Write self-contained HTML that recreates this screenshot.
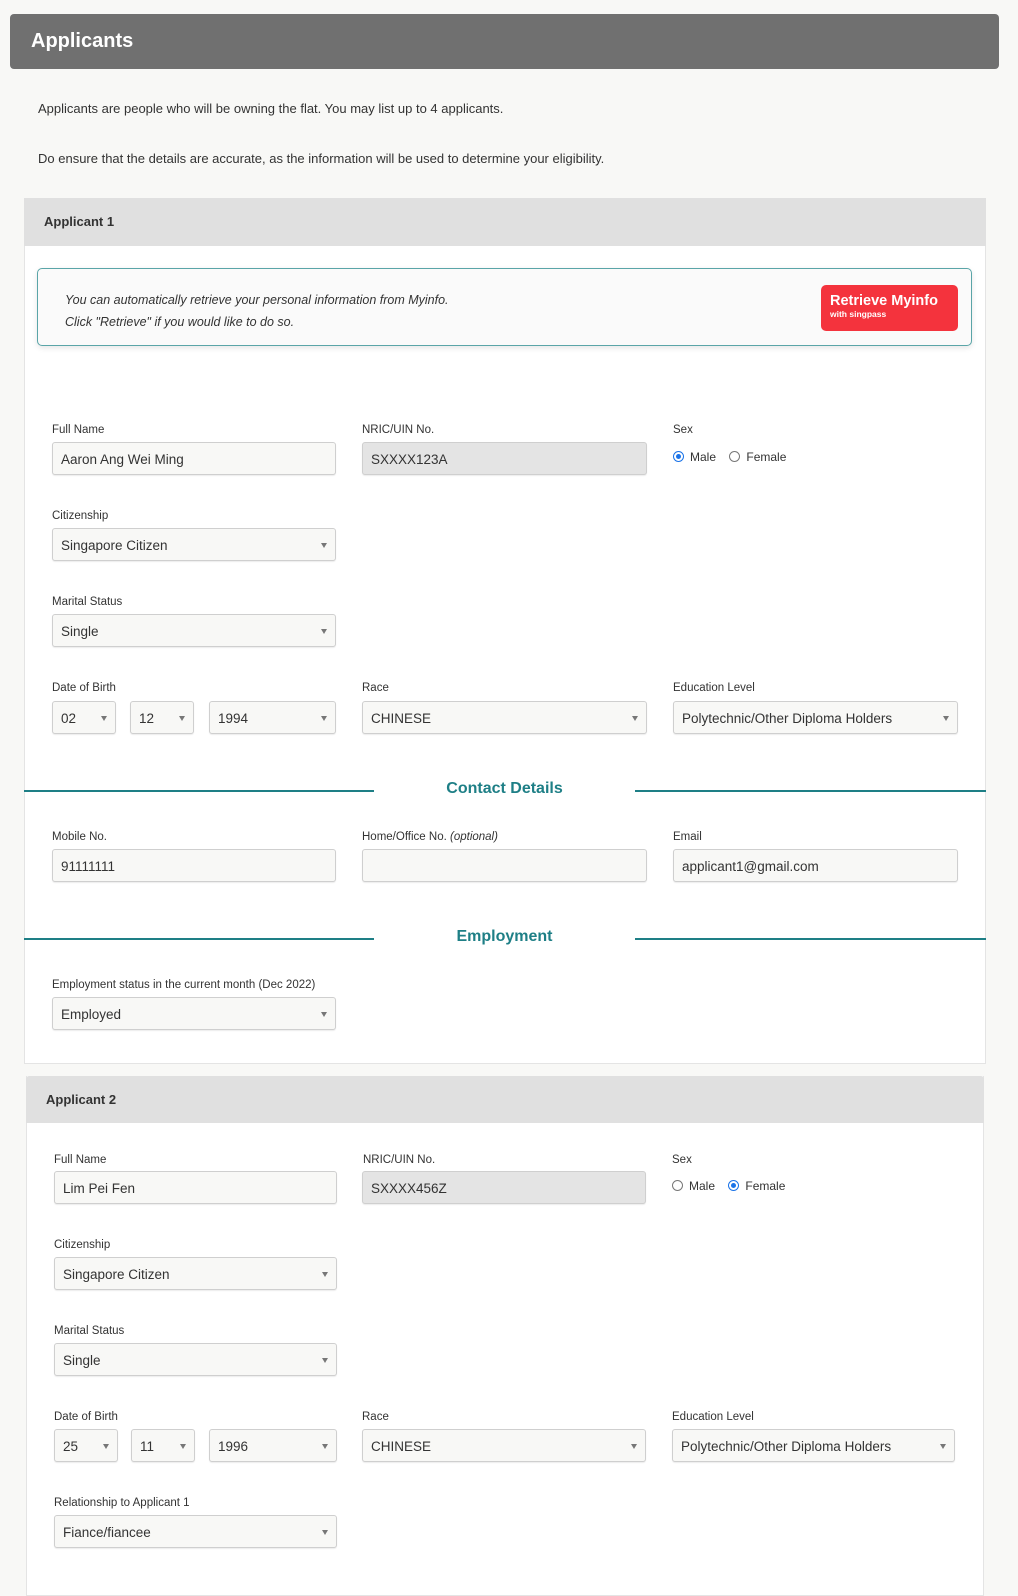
<!DOCTYPE html>
<html><head><meta charset="utf-8"><style>
*{box-sizing:border-box;margin:0;padding:0}
body{width:1018px;height:1582px;background:#f8f8f6;font-family:"Liberation Sans",sans-serif;color:#333;position:relative;overflow:hidden}
.a{position:absolute}
.top{left:10px;top:14px;width:989px;height:55px;background:#707070;border-radius:4px;color:#fff;font-size:20px;font-weight:bold;padding:16px 0 0 21px}
.p{font-size:13px;color:#333}
.card{background:#fff;border:1px solid #e4e4e4}
.hd{background:#e0e0e0;font-size:13px;font-weight:bold;color:#333}
.lb{font-size:11.5px;color:#333}
.in{height:33px;border:1px solid #cfcfcf;border-radius:3px;background:#f8f8f6;font-size:13.5px;color:#333;padding:9px 0 0 8px;box-shadow:0 1px 1px rgba(0,0,0,.08)}
.dis{background:#e4e4e4}
.sel::after{content:"";position:absolute;right:8px;top:14px;border-left:3.5px solid transparent;border-right:3.5px solid transparent;border-top:5px solid #777}
.rad{font-size:12px;color:#333}
.r{display:inline-block;width:11px;height:11px;border:1px solid #777;border-radius:50%;vertical-align:-1px;margin-right:6px;position:relative;background:#fff}
.r.on{border-color:#1a73e8}
.r.on::after{content:"";position:absolute;left:2px;top:2px;width:5px;height:5px;border-radius:50%;background:#1a73e8}
.ln{height:2px;background:#1e7f86}
.sec{font-size:16px;font-weight:bold;color:#1e7f86;text-align:center}
</style></head><body>
<div class="a top">Applicants</div>
<div class="a p" style="left:38px;top:101px">Applicants are people who will be owning the flat. You may list up to 4 applicants.</div>
<div class="a p" style="left:38px;top:151px">Do ensure that the details are accurate, as the information will be used to determine your eligibility.</div>

<div class="a card" style="left:24px;top:198px;width:962px;height:866px;border-top:none"></div>
<div class="a hd" style="left:24px;top:198px;width:962px;height:48px;padding:16px 0 0 20px">Applicant 1</div>
<div class="a" style="left:37px;top:268px;width:935px;height:78px;border:1.5px solid #5aa5a8;border-radius:5px;background:#fafafa;box-shadow:0 2px 6px rgba(0,0,0,.1)"></div>
<div class="a" style="left:65px;top:289px;font-size:12.5px;font-style:italic;line-height:22px;color:#333">You can automatically retrieve your personal information from Myinfo.<br>Click "Retrieve" if you would like to do so.</div>
<div class="a" style="left:821px;top:285px;width:137px;height:46px;background:#f4333d;border-radius:5px;color:#fff;padding:8px 0 0 9px"><div style="font-size:14.5px;font-weight:bold">Retrieve Myinfo</div><div style="font-size:8.5px;font-weight:bold;margin-top:0">with singpass</div></div>

<div class="a lb" style="left:52px;top:424px">Full Name</div>
<div class="a in" style="left:52px;top:442px;width:284px">Aaron Ang Wei Ming</div>
<div class="a lb" style="left:362px;top:424px">NRIC/UIN No.</div>
<div class="a in dis" style="left:362px;top:442px;width:285px">SXXXX123A</div>
<div class="a lb" style="left:673px;top:424px">Sex</div>
<div class="a rad" style="left:673px;top:450px"><span class="r on"></span>Male &nbsp;&nbsp;&nbsp;<span class="r"></span>Female</div>

<div class="a lb" style="left:52px;top:510px">Citizenship</div>
<div class="a in sel" style="left:52px;top:528px;width:284px">Singapore Citizen</div>
<div class="a lb" style="left:52px;top:596px">Marital Status</div>
<div class="a in sel" style="left:52px;top:614px;width:284px">Single</div>
<div class="a lb" style="left:52px;top:682px">Date of Birth</div>
<div class="a in sel" style="left:52px;top:701px;width:64px">02</div>
<div class="a in sel" style="left:130px;top:701px;width:64px">12</div>
<div class="a in sel" style="left:209px;top:701px;width:127px">1994</div>
<div class="a lb" style="left:362px;top:682px">Race</div>
<div class="a in sel" style="left:362px;top:701px;width:285px">CHINESE</div>
<div class="a lb" style="left:673px;top:682px">Education Level</div>
<div class="a in sel" style="left:673px;top:701px;width:285px">Polytechnic/Other Diploma Holders</div>

<div class="a ln" style="left:24px;top:790px;width:350px"></div>
<div class="a ln" style="left:635px;top:790px;width:351px"></div>
<div class="a sec" style="left:374px;top:780px;width:261px">Contact Details</div>
<div class="a lb" style="left:52px;top:831px">Mobile No.</div>
<div class="a in" style="left:52px;top:849px;width:284px">91111111</div>
<div class="a lb" style="left:362px;top:831px">Home/Office No. <i>(optional)</i></div>
<div class="a in" style="left:362px;top:849px;width:285px"></div>
<div class="a lb" style="left:673px;top:831px">Email</div>
<div class="a in" style="left:673px;top:849px;width:285px">applicant1@gmail.com</div>

<div class="a ln" style="left:24px;top:938px;width:350px"></div>
<div class="a ln" style="left:635px;top:938px;width:351px"></div>
<div class="a sec" style="left:374px;top:928px;width:261px">Employment</div>
<div class="a lb" style="left:52px;top:979px">Employment status in the current month (Dec 2022)</div>
<div class="a in sel" style="left:52px;top:997px;width:284px">Employed</div>

<div class="a card" style="left:26px;top:1076px;width:958px;height:520px;border-top:none"></div>
<div class="a hd" style="left:26px;top:1076px;width:958px;height:47px;padding:16px 0 0 20px;border-radius:3px 3px 0 0">Applicant 2</div>
<div class="a lb" style="left:54px;top:1154px">Full Name</div>
<div class="a in" style="left:54px;top:1171px;width:283px">Lim Pei Fen</div>
<div class="a lb" style="left:363px;top:1154px">NRIC/UIN No.</div>
<div class="a in dis" style="left:362px;top:1171px;width:284px">SXXXX456Z</div>
<div class="a lb" style="left:672px;top:1154px">Sex</div>
<div class="a rad" style="left:672px;top:1179px"><span class="r"></span>Male &nbsp;&nbsp;&nbsp;<span class="r on"></span>Female</div>
<div class="a lb" style="left:54px;top:1239px">Citizenship</div>
<div class="a in sel" style="left:54px;top:1257px;width:283px">Singapore Citizen</div>
<div class="a lb" style="left:54px;top:1325px">Marital Status</div>
<div class="a in sel" style="left:54px;top:1343px;width:283px">Single</div>
<div class="a lb" style="left:54px;top:1411px">Date of Birth</div>
<div class="a in sel" style="left:54px;top:1429px;width:64px">25</div>
<div class="a in sel" style="left:131px;top:1429px;width:64px">11</div>
<div class="a in sel" style="left:209px;top:1429px;width:128px">1996</div>
<div class="a lb" style="left:362px;top:1411px">Race</div>
<div class="a in sel" style="left:362px;top:1429px;width:284px">CHINESE</div>
<div class="a lb" style="left:672px;top:1411px">Education Level</div>
<div class="a in sel" style="left:672px;top:1429px;width:283px">Polytechnic/Other Diploma Holders</div>
<div class="a lb" style="left:54px;top:1497px">Relationship to Applicant 1</div>
<div class="a in sel" style="left:54px;top:1515px;width:283px">Fiance/fiancee</div>
</body></html>
